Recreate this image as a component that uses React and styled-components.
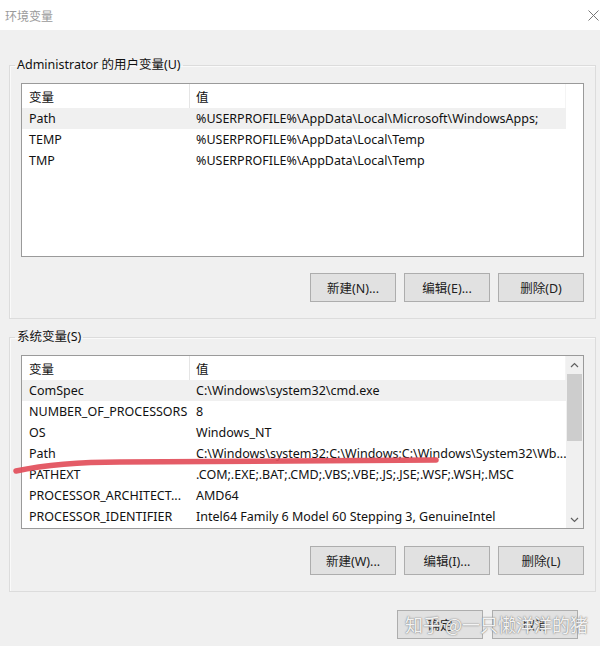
import React from "react";
import styled, { createGlobalStyle } from "styled-components";

const GlobalStyle = createGlobalStyle`
  html, body {
    margin: 0;
    padding: 0;
    background: #f0f0f0;
  }
  body {
    font-family: "Segoe UI", "Noto Sans", "Noto Sans CJK SC", sans-serif;
    font-size: 12.5px;
    color: #111;
  }
`;

const Window = styled.div`
  position: relative;
  width: 600px;
  height: 646px;
  background: #f0f0f0;
  overflow: hidden;
`;

const TitleBar = styled.div`
  height: 30px;
  background: #fff;
  display: flex;
  align-items: center;
  justify-content: space-between;
  padding: 0 1px 0 5px;
  color: #9a9a9a;
  font-family: "Noto Sans CJK SC", sans-serif;
  font-size: 12px;
`;

const CloseBtn = styled.div`
  width: 12px;
  height: 12px;
  display: flex;
  align-items: center;
  justify-content: center;
`;

const Group = styled.fieldset`
  margin: ${(p) => p.$top}px 4px 0 9px;
  padding: 10px 11px ${(p) => p.$bottom}px 11px;
  border: 1px solid #dcdcdc;
  box-shadow: inset 1px 1px 0 #fafafa;
  min-width: 0;
`;

const Legend = styled.legend`
  margin-left: -6px;
  padding: 0 2px;
  line-height: 16px;
  font-family: "Segoe UI", "Noto Sans", "Noto Sans CJK SC", sans-serif;
  color: #111;
`;

const List = styled.div`
  height: 172px;
  border: 1px solid #9a9a9a;
  background: #fff;
  display: flex;
`;

const ListBody = styled.div`
  width: 544px;
  display: flex;
  flex-direction: column;
`;

const HeaderRow = styled.div`
  height: 24px;
  display: grid;
  grid-template-columns: 168px 376px;
  align-items: stretch;
  font-family: "Noto Sans CJK SC", sans-serif;
`;

const HeaderCell = styled.div`
  display: flex;
  align-items: center;
  padding-left: ${(p) => (p.$first ? 7 : 6)}px;
  border-right: 1px solid ${(p) => (p.$first ? "#e5e5e5" : "#f4f4f4")};
`;

const Row = styled.div`
  height: 21px;
  display: grid;
  grid-template-columns: 168px 376px;
  align-items: center;
  background: ${(p) => (p.$selected ? "#f0f0f0" : "transparent")};
`;

const Cell = styled.div`
  padding-left: ${(p) => (p.$first ? 7 : 6)}px;
  white-space: nowrap;
  overflow: hidden;
`;

const ScrollBar = styled.div`
  width: 17px;
  margin-left: auto;
  background: #f0f0f0;
  display: flex;
  flex-direction: column;
`;

const ScrollArrow = styled.div`
  height: 17px;
  display: flex;
  align-items: center;
  justify-content: center;
`;

const Track = styled.div`
  flex: 1;
  display: flex;
  flex-direction: column;
  align-items: center;
`;

const Thumb = styled.div`
  margin-top: 1px;
  width: 15px;
  height: 67px;
  background: #cdcdcd;
`;

const ButtonRow = styled.div`
  display: flex;
  justify-content: flex-end;
  gap: ${(p) => p.$gap || 8}px;
  margin-top: ${(p) => p.$top || 0}px;
  padding-right: ${(p) => p.$right || 0}px;
`;

const Button = styled.button`
  width: 86px;
  height: 29px;
  background: #e1e1e1;
  border: 1px solid #adadad;
  font-family: "Segoe UI", "Noto Sans", "Noto Sans CJK SC", sans-serif;
  font-size: 12.5px;
  color: #222;
  padding: 0;
`;

const Overlay = styled.svg`
  position: absolute;
  left: 0;
  top: 0;
  pointer-events: none;
`;

const Watermark = styled.div`
  position: absolute;
  left: 405px;
  top: 611px;
  font-family: "Noto Sans CJK SC", sans-serif;
  font-size: 18px;
  line-height: 26px;
  color: rgba(255, 255, 255, 0.92);
  text-shadow: 0 0 1px #777, 0 0 2px #999;
  white-space: nowrap;
`;

const Chevron = ({ up }) => (
  <svg width="9" height="6" viewBox="0 0 9 6">
    <path
      d={up ? "M1 5 L4.5 1.5 L8 5" : "M1 1 L4.5 4.5 L8 1"}
      fill="none"
      stroke="#606060"
      strokeWidth="1.2"
    />
  </svg>
);

const userVars = [
  ["Path", "%USERPROFILE%\\AppData\\Local\\Microsoft\\WindowsApps;"],
  ["TEMP", "%USERPROFILE%\\AppData\\Local\\Temp"],
  ["TMP", "%USERPROFILE%\\AppData\\Local\\Temp"],
];

const sysVars = [
  ["ComSpec", "C:\\Windows\\system32\\cmd.exe"],
  ["NUMBER_OF_PROCESSORS", "8"],
  ["OS", "Windows_NT"],
  ["Path", "C:\\Windows\\system32;C:\\Windows;C:\\Windows\\System32\\Wb..."],
  ["PATHEXT", ".COM;.EXE;.BAT;.CMD;.VBS;.VBE;.JS;.JSE;.WSF;.WSH;.MSC"],
  ["PROCESSOR_ARCHITECT...", "AMD64"],
  ["PROCESSOR_IDENTIFIER", "Intel64 Family 6 Model 60 Stepping 3, GenuineIntel"],
];

const VarList = ({ rows, scroll }) => (
  <List>
    <ListBody>
      <HeaderRow>
        <HeaderCell $first>变量</HeaderCell>
        <HeaderCell>值</HeaderCell>
      </HeaderRow>
      {rows.map(([name, value], i) => (
        <Row key={name + i} $selected={i === 0}>
          <Cell $first>{name}</Cell>
          <Cell>{value}</Cell>
        </Row>
      ))}
    </ListBody>
    {scroll && (
      <ScrollBar>
        <ScrollArrow>
          <Chevron up />
        </ScrollArrow>
        <Track>
          <Thumb />
        </Track>
        <ScrollArrow>
          <Chevron />
        </ScrollArrow>
      </ScrollBar>
    )}
  </List>
);

export default function App() {
  return (
    <Window>
      <GlobalStyle />
      <TitleBar>
        <span>环境变量</span>
        <CloseBtn>
          <svg width="11" height="11" viewBox="0 0 11 11">
            <path d="M0.5 0.5 L10.5 10.5 M10.5 0.5 L0.5 10.5" stroke="#777" strokeWidth="1" />
          </svg>
        </CloseBtn>
      </TitleBar>

      <Group $top={27} $bottom={16}>
        <Legend>Administrator 的用户变量(U)</Legend>
        <VarList rows={userVars} />
        <ButtonRow $top={16}>
          <Button>新建(N)...</Button>
          <Button>编辑(E)...</Button>
          <Button>删除(D)</Button>
        </ButtonRow>
      </Group>

      <Group $top={10} $bottom={16}>
        <Legend>系统变量(S)</Legend>
        <VarList rows={sysVars} scroll />
        <ButtonRow $top={17}>
          <Button>新建(W)...</Button>
          <Button>编辑(I)...</Button>
          <Button>删除(L)</Button>
        </ButtonRow>
      </Group>

      <ButtonRow $top={18} $right={22} $gap={9}>
        <Button>确定</Button>
        <Button>取消</Button>
      </ButtonRow>

      <Overlay width="600" height="646">
        <path
          d="M16 471 C 40 466, 70 462, 120 462 L 436 460"
          fill="none"
          stroke="#e24e5a"
          strokeWidth="5.5"
          strokeLinecap="round"
          opacity="0.92"
        />
      </Overlay>
      <Watermark>知乎 @一只懒洋洋的猪</Watermark>
    </Window>
  );
}
